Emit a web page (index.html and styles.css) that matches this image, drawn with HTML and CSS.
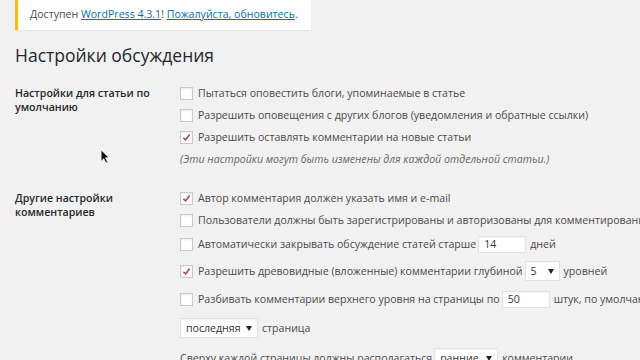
FILE: index.html
```html
<!DOCTYPE html>
<html lang="ru">
<head>
    <meta charset="UTF-8">
    <meta name="viewport" content="width=device-width, initial-scale=1.0">
    <title>Настройки обсуждения</title>
    <link rel="stylesheet" href="styles.css">
</head>
<body>
    <div class="wrap">
        <div class="notice">
            Доступен <a href="#">WordPress 4.3.1</a>! <a href="#">Пожалуйста, обновитесь</a>.
        </div>

        <h1>Настройки обсуждения</h1>

        <div class="section first">
            <div class="label">Настройки для статьи по умолчанию</div>
            <div class="fields">
                <div class="row"><span class="box"></span>Пытаться оповестить блоги, упоминаемые в статье</div>
                <div class="row"><span class="box"></span>Разрешить оповещения с других блогов (уведомления и обратные ссылки)</div>
                <div class="row"><span class="box checked"><svg viewBox="0 0 12 12"><path d="M2.6 6.2 L5 8.6 L9.4 2.8"/></svg></span>Разрешить оставлять комментарии на новые статьи</div>
                <div class="row note">(Эти настройки могут быть изменены для каждой отдельной статьи.)</div>
            </div>
        </div>

        <div class="section">
            <div class="label">Другие настройки комментариев</div>
            <div class="fields">
                <div class="row"><span class="box checked"><svg viewBox="0 0 12 12"><path d="M2.6 6.2 L5 8.6 L9.4 2.8"/></svg></span>Автор комментария должен указать имя и e-mail</div>
                <div class="row"><span class="box"></span>Пользователи должны быть зарегистрированы и авторизованы для комментирования</div>
                <div class="row r26"><span class="box"></span>Автоматически закрывать обсуждение статей старше <span class="input">14</span> дней</div>
                <div class="row r28"><span class="box checked"><svg viewBox="0 0 12 12"><path d="M2.6 6.2 L5 8.6 L9.4 2.8"/></svg></span>Разрешить древовидные (вложенные) комментарии глубиной <span class="select small">5</span> уровней</div>
                <div class="row r28"><span class="box"></span>Разбивать комментарии верхнего уровня на страницы по <span class="input">50</span> штук, по умолчанию показывается</div>
                <div class="row r30"><span class="select wide">последняя</span> страница</div>
                <div class="row r30">Сверху каждой страницы должны располагаться <span class="select mid">ранние</span> комментарии</div>
            </div>
        </div>
    </div>

    <svg class="cursor" viewBox="0 0 12 17"><path d="M1 1 L1 14 L4 11 L6.5 16 L8.5 15 L6 10 L10 10 Z"/></svg>
</body>
</html>
```

FILE: styles.css
```css
html, body {
    margin: 0;
    height: 100%;
    overflow: hidden;
}
body {
    background: #f1f1f1;
    color: #4a4a4a;
    font-family: "Open Sans", "Noto Sans", sans-serif;
    font-size: 10.6px;
    position: relative;
}
.wrap {
    padding-left: 15px;
}
.notice {
    width: 281px;
    height: 30px;
    margin-top: -8px;
    padding: 8px 0 0 12px;
    box-sizing: content-box;
    background: #fff;
    border-left: 3px solid #ffba00;
    box-shadow: 0 1px 1px rgba(0, 0, 0, 0.05);
    line-height: 29px;
    white-space: nowrap;
}
.notice a {
    color: #0073aa;
}
h1 {
    margin: 0;
    padding-top: 9px;
    font-size: 17.5px;
    font-weight: 400;
    line-height: 32px;
    color: #23282d;
}
.section {
    display: flex;
}
.section.first {
    padding-top: 11px;
}
.section + .section {
    padding-top: 17px;
}
.label {
    width: 150px;
    flex: none;
    margin-right: 15px;
    padding-top: 4px;
    font-weight: 600;
    line-height: 14px;
    color: #23282d;
}
.fields {
    flex: 1;
    white-space: nowrap;
}
.row {
    display: flex;
    align-items: center;
    height: 22px;
}
.row.r26 { height: 26px; }
.row.r28 { height: 28px; }
.row.r30 { height: 30px; }
.note {
    font-style: italic;
    color: #666;
}
.box {
    width: 11px;
    height: 11px;
    flex: none;
    margin-right: 5px;
    background: #fff;
    border: 1px solid #c7cacd;
    box-shadow: inset 0 1px 2px rgba(0, 0, 0, 0.08);
    display: flex;
}
.box svg {
    width: 11px;
    height: 11px;
}
.box svg path {
    fill: none;
    stroke: #b03a55;
    stroke-width: 1.6;
}
.input, .select {
    display: inline-flex;
    align-items: center;
    box-sizing: border-box;
    background: #fff;
    border: 1px solid #e2e2e2;
    box-shadow: inset 0 1px 2px rgba(0, 0, 0, 0.05);
    color: #333;
    margin: 0 4px 0 2px;
}
.input {
    width: 48px;
    height: 17px;
    padding-left: 5px;
}
.select {
    height: 20px;
    padding-left: 5px;
    justify-content: space-between;
    padding-right: 5px;
}
.select::after {
    content: "";
    border-left: 3px solid transparent;
    border-right: 3px solid transparent;
    border-top: 5px solid #222;
}
.select.small { width: 35px; }
.select.wide { width: 78px; margin-left: 0; }
.select.mid { width: 64px; }
.cursor {
    position: absolute;
    left: 100px;
    top: 149px;
    width: 11px;
    height: 15px;
}
.cursor path {
    fill: #111;
    stroke: #fff;
    stroke-width: 0.8;
}
```
